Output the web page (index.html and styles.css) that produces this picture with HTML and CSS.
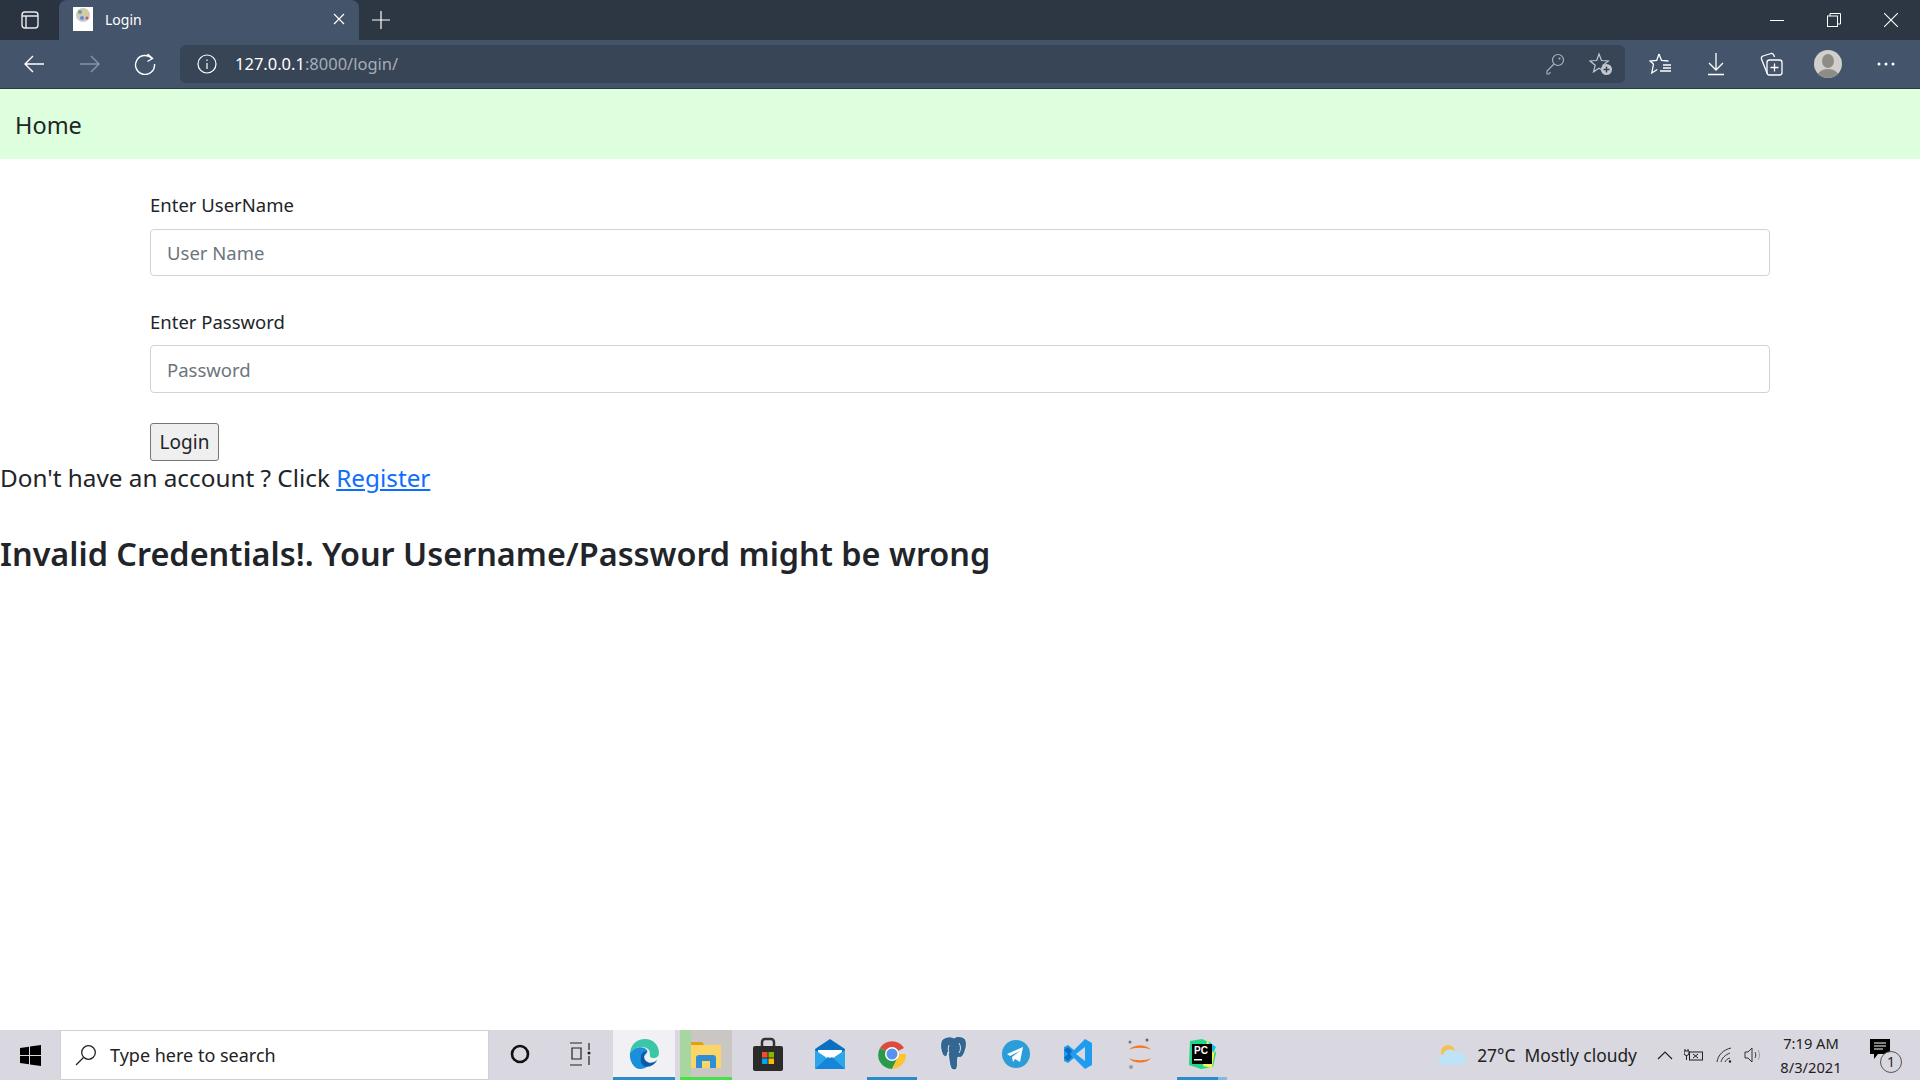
FILE: index.html
```html
<!DOCTYPE html>
<html lang="en">
<head>
    <meta charset="UTF-8">
    <title>Login</title>
    <link rel="stylesheet" href="styles.css">
</head>
<body>
    <!-- Browser tabs -->
    <div class="tabstrip">
        <div class="tab-toggle">
            <svg width="18" height="18" viewBox="0 0 18 18" fill="none" stroke="#e8eaed" stroke-width="1.4"><rect x="1" y="1" width="16" height="16" rx="3"/><path d="M1 5h16M5 5v12"/></svg>
        </div>
        <div class="tab">
            <svg class="favicon" width="20" height="24" viewBox="0 0 20 24"><rect width="20" height="24" fill="#fff"/><circle cx="10" cy="8" r="7" fill="#c9c9c9"/><circle cx="7" cy="5" r="2" fill="#6fa86f"/><circle cx="13" cy="6" r="2" fill="#e5cf5c"/><circle cx="9" cy="11" r="2" fill="#5d8fc9"/><circle cx="14" cy="11" r="1.6" fill="#cc5a5a"/></svg>
            <span class="tab-title">Login</span>
            <svg class="tab-close" width="12" height="12" viewBox="0 0 12 12" stroke="#fff" stroke-width="1.2"><path d="M1 1l10 10M11 1L1 11"/></svg>
        </div>
        <div class="new-tab">
            <svg width="18" height="18" viewBox="0 0 18 18" stroke="#fff" stroke-width="1.2"><path d="M9 0v18M0 9h18"/></svg>
        </div>
        <div class="window-controls">
            <svg width="14" height="14" viewBox="0 0 14 14" stroke="#fff" stroke-width="1"><path d="M0 7.5h14"/></svg>
            <svg width="14" height="14" viewBox="0 0 14 14" fill="none" stroke="#fff" stroke-width="1"><rect x=".5" y="3" width="10" height="10.5"/><path d="M3 3V.5h10.500V11h-3"/></svg>
            <svg width="14" height="14" viewBox="0 0 14 14" stroke="#fff" stroke-width="1.100"><path d="M0 0l14 14M14 0L0 14"/></svg>
        </div>
    </div>

    <!-- Address bar -->
    <div class="toolbar">
        <div class="nav-btn">
            <svg width="22" height="20" viewBox="0 0 22 20" fill="none" stroke="#fff" stroke-width="1.400"><path d="M21 10H2M10 2l-8 8 8 8"/></svg>
        </div>
        <div class="nav-btn">
            <svg width="22" height="20" viewBox="0 0 22 20" fill="none" stroke="#8a94a3" stroke-width="1.400"><path d="M1 10h19M12 2l8 8-8 8"/></svg>
        </div>
        <div class="nav-btn reload-btn">
            <svg width="22" height="22" viewBox="0 0 22 22" fill="none" stroke="#fff" stroke-width="1.400"><path d="M18 5.500A9.500 9.500 0 1 0 20.500 11"/><path d="M13.500 1l5 4.500-5 3" /></svg>
        </div>
        <div class="address">
            <svg class="info-icon" width="20" height="20" viewBox="0 0 20 20" fill="none" stroke="#fff" stroke-width="1.200"><circle cx="10" cy="10" r="9"/><path d="M10 9v6M10 5.500v1.500"/></svg>
            <span class="url"><span class="url-host">127.0.0.1</span>:8000/login/</span>
            <svg class="addr-key" width="20" height="22" viewBox="0 0 20 22" fill="none" stroke="#aab2bd" stroke-width="1.200"><circle cx="13" cy="7" r="5.500"/><path d="M9 11l-7 7v3h2l1.500-2"/><circle cx="14.500" cy="5.500" r=".5"/></svg>
            <svg class="addr-star" width="24" height="24" viewBox="0 0 24 24" fill="none" stroke="#c3c8d0" stroke-width="1.200"><path d="M10 2l2.500 6.500 6.800.5-5.300 4.300 1.800 6.500-5.800-3.600-5.500 3.600 1.700-6.500L1 9l6.700-.5z"/><circle cx="17.500" cy="17.500" r="5.500" fill="#c3c8d0" stroke="none"/><path d="M17.500 14.500v6M14.500 17.500h6" stroke="#384556" stroke-width="1.500"/></svg>
        </div>
        <div class="tool-btns">
            <div class="tool-btn">
                <svg width="24" height="24" viewBox="0 0 24 24" fill="none" stroke="#fff" stroke-width="1.300"><path d="M10 2l2.500 6.500 7 .5M4.500 12L1 9l6.700-.5L10 2M4.500 12l-1.700 9 5.500-3.500"/><path d="M14 13h8M14 16h8M11 19h11"/></svg>
            </div>
            <div class="tool-btn">
                <svg width="20" height="24" viewBox="0 0 20 24" fill="none" stroke="#fff" stroke-width="1.300"><path d="M10 1v17M3 11l7 7 7-7M2 22.500h16"/></svg>
            </div>
            <div class="tool-btn">
                <svg width="24" height="24" viewBox="0 0 24 24" fill="none" stroke="#fff" stroke-width="1.300"><path d="M8 21L2.500 7A2.500 2.500 0 0 1 4 4l8-2.500c1.500-.4 2.500.6 3 2l.5 1.500"/><rect x="8" y="8" width="15" height="15" rx="2.500"/><path d="M15.500 11.500v8M11.500 15.500h8"/></svg>
            </div>
            <div class="tool-btn profile-btn">
                <svg width="28" height="28" viewBox="0 0 28 28"><defs><clipPath id="avatar-clip"><circle cx="14" cy="14" r="14"/></clipPath></defs><circle cx="14" cy="14" r="14" fill="#d1cfcb"/><g clip-path="url(#avatar-clip)" fill="#8f8c88"><ellipse cx="14" cy="11" rx="6" ry="7"/><ellipse cx="14" cy="27" rx="11" ry="8"/></g></svg>
            </div>
            <div class="tool-btn">
                <svg width="18" height="4" viewBox="0 0 18 4" fill="#fff"><circle cx="2" cy="2" r="1.500"/><circle cx="9" cy="2" r="1.500"/><circle cx="16" cy="2" r="1.500"/></svg>
            </div>
        </div>
    </div>

    <!-- Page -->
    <nav class="navbar">
        <a class="navbar-home" href="#">Home</a>
    </nav>

    <main class="page">
        <form class="login-form">
            <div class="form-group">
                <label for="username">Enter UserName</label>
                <input type="text" id="username" placeholder="User Name">
            </div>
            <div class="form-group">
                <label for="password">Enter Password</label>
                <input type="password" id="password" class="password-input" placeholder="Password">
            </div>
            <button type="submit" class="login-btn">Login</button>
        </form>
        <p class="register-line">Don't have an account ? Click <a href="#">Register</a></p>
        <h3 class="error-msg">Invalid Credentials!. Your Username/Password might be wrong</h3>
    </main>

    <!-- Windows taskbar -->
    <footer class="taskbar">
        <div class="start-btn">
            <svg width="21" height="21" viewBox="0 0 21 21" fill="#000"><path d="M0 3l9-1.300V10H0zM10 1.500L21 0v10H10zM0 11h9v8.300L0 18zM10 11h11v10l-11-1.500z"/></svg>
        </div>
        <div class="search-box">
            <svg width="22" height="22" viewBox="0 0 22 22" fill="none" stroke="#222" stroke-width="1.300"><circle cx="13.500" cy="8.500" r="6.800"/><path d="M8.500 13.500L1 21"/></svg>
            <span>Type here to search</span>
        </div>
        <div class="task-slot">
            <svg width="20" height="20" viewBox="0 0 20 20" fill="none" stroke="#111" stroke-width="2.600"><circle cx="10" cy="10" r="8"/></svg>
        </div>
        <div class="task-slot task-view">
            <svg width="22" height="24" viewBox="0 0 22 24" fill="none" stroke="#222" stroke-width="1.200"><path d="M1 1h12M3 6h9v11H3zM1 23h12M20 1v7M20 14v9"/><circle cx="20" cy="11" r="1.500" fill="#222" stroke="none"/></svg>
        </div>
        <div class="task-slot is-active">
            <svg width="32" height="32" viewBox="0 0 32 32"><path d="M2 15C3 6 9 1 17 1c8 0 14 6 14 14 0 3-2 5-6 5-5 0-2-5-4-8-3-4-13-5-19 3z" fill="#39c7a5"/><path d="M2 15c4-6 13-8 17-3 1 2 0 3-2 5-3 3-2 8 3 11-2 2-5 3-8 3C6 31 1 23 2 15z" fill="#1a8fdc"/><path d="M13 19c0-4 3-6 6-6-3 3-4 7-1 10 3 3 8 2 11-1-2 5-8 8-13 6-3-2-4-5-3-9z" fill="#0c5ba8"/></svg>
        </div>
        <div class="task-slot is-open">
            <svg width="30" height="30" viewBox="0 0 30 30"><path d="M0 3h11l3 4H0z" fill="#e0a30f"/><rect y="6" width="30" height="23" fill="#fbd667"/><path d="M5 29V19a3 3 0 0 1 3-3h14a3 3 0 0 1 3 3v10h-6v-7h-8v7z" fill="#2e8fd6"/></svg>
        </div>
        <div class="task-slot">
            <svg width="30" height="34" viewBox="0 0 30 34"><path d="M9 9V5a3 3 0 0 1 3-3h6a3 3 0 0 1 3 3v4" fill="none" stroke="#333" stroke-width="2.500"/><rect y="9" width="30" height="25" rx="2" fill="#2b2b2b"/><rect x="9" y="15" width="5.500" height="5.500" fill="#f25022"/><rect x="15.500" y="15" width="5.500" height="5.500" fill="#7fba00"/><rect x="9" y="21.500" width="5.500" height="5.500" fill="#00a4ef"/><rect x="15.500" y="21.500" width="5.500" height="5.500" fill="#ffb900"/></svg>
        </div>
        <div class="task-slot">
            <svg width="30" height="30" viewBox="0 0 30 30"><path d="M0 10L15 0l15 10v3H0z" fill="#0b6fc2"/><path d="M3 11h24v8L15 25 3 19z" fill="#fff"/><path d="M0 11l15 10 15-10v19H0z" fill="#2ca6ea"/><path d="M0 30l13-12 2 1 2-1 13 12z" fill="#1684d8"/></svg>
        </div>
        <div class="task-slot running">
            <svg width="30" height="30" viewBox="0 0 30 30"><path d="M15 15L3 9a14 14 0 0 1 24 0z" fill="#dd4b3e"/><path d="M15 15l6 3-6 12A14 14 0 0 1 3 9z" fill="#2a9a4a"/><path d="M15 15h14a14 14 0 0 1-14 15l6-12z" fill="#fbc530"/><circle cx="15" cy="15" r="7" fill="#fff"/><circle cx="15" cy="15" r="5.500" fill="#5a90ee"/></svg>
        </div>
        <div class="task-slot">
            <svg width="28" height="34" viewBox="0 0 28 34"><path d="M3 2C0 4 0 11 2 16c1 3 3 4 5 3l1-4c1 5 1 12 3 16 1 2 5 3 6 0 1-4 0-7 1-11 3 2 6-2 7-6 2-5 2-11-1-13-4-2-7-2-10 0-4-2-8-1-11 1z" fill="#336791" stroke="#fff" stroke-width=".700"/><path d="M9 8c-1 3-1 5 0 8M19 6c2 3 2 7 0 10" fill="none" stroke="#fff" stroke-width=".800"/></svg>
        </div>
        <div class="task-slot">
            <svg width="28" height="28" viewBox="0 0 28 28"><circle cx="14" cy="14" r="14" fill="#2b9dd9"/><path d="M5 14l16-7-3 15-5-3-2 3-1-5 8-6-10 5z" fill="#fff"/></svg>
        </div>
        <div class="task-slot">
            <svg width="30" height="30" viewBox="0 0 30 30"><path d="M22 0l7 4v22l-7 4-11-11-6 5-4-2V8l4-2 6 5z" fill="#1f9cf0"/><path d="M22 8v14L13 15z" fill="#d8d8e0"/><path d="M1 11l4-3 4 4-2 3 2 3-4 4-4-3 4-4z" fill="#0b6cbf"/></svg>
        </div>
        <div class="task-slot">
            <svg width="26" height="32" viewBox="0 0 26 32"><path d="M2 12C6 6 20 6 24 12 20 9 6 9 2 12zM2 20c4 6 18 6 22 0-4 3-18 3-22 0z" fill="#f37726"/><circle cx="3" cy="4" r="1.500" fill="#767677"/><circle cx="20" cy="2" r="1.500" fill="#616262"/><circle cx="4" cy="29" r="2" fill="#9e9e9e"/></svg>
        </div>
        <div class="task-slot running-split">
            <svg width="30" height="30" viewBox="0 0 30 30"><path d="M3 2l12-2 9 4 5 10-3 14-12 2-12-4z" fill="#21d789"/><path d="M20 2l8 8-3 19-9-2z" fill="#fcf84a"/><path d="M22 3l7 5-3 6z" fill="#07c3f2"/><rect x="5" y="5" width="20" height="20" fill="#000"/><text x="7" y="15" class="pc-mark">PC</text><rect x="7" y="20" width="8" height="1.500" fill="#fff"/></svg>
        </div>

        <div class="tray">
            <svg class="tray-weather" width="28" height="22" viewBox="0 0 28 22"><circle cx="10" cy="8" r="7" fill="#f4c04e"/><path d="M6 21a5 5 0 0 1-1-10 7 7 0 0 1 13-2 6 6 0 0 1 6 12z" fill="#bfe3f6"/></svg>
            <span class="tray-weather-text">27°C&nbsp; Mostly cloudy</span>
            <svg class="tray-caret" width="16" height="10" viewBox="0 0 16 10" fill="none" stroke="#222" stroke-width="1.200"><path d="M1 9l7-7 7 7"/></svg>
            <svg width="20" height="14" viewBox="0 0 20 14" fill="none" stroke="#222"><path d="M1 1v2M4 1v2M0 3h5v2a2.500 2.500 0 0 1-5 0zM2.500 7v5"/><rect x="5.500" y="4" width="13" height="8"/><path d="M9 6l5 4M14 6l-5 4"/></svg>
            <svg width="18" height="16" viewBox="0 0 18 16" fill="none" stroke="#333"><path d="M2 15C3 8 8 3 16 1M6 15c1-4 4-7 9-9M10 15c1-2 2-3 5-4"/><circle cx="15" cy="14.500" r="1.200" fill="#222" stroke="none"/></svg>
            <svg width="18" height="16" viewBox="0 0 18 16" fill="none" stroke="#333"><path d="M1 5h3l4-4v14l-4-4H1zM11 5c1 2 1 4 0 6"/><path d="M14 3c2 3 2 7 0 10" stroke="#999"/></svg>
            <div class="clock">
                <span>7:19 AM</span>
                <span>8/3/2021</span>
            </div>
            <div class="notify">
                <svg width="20" height="20" viewBox="0 0 20 20"><path d="M0 0h20v15H8l-4 5v-5H0z" fill="#000"/><path d="M4 4h12M4 7h12M4 10h9" stroke="#fff"/></svg>
                <span class="notify-badge">1</span>
            </div>
        </div>
    </footer>
</body>
</html>
```

FILE: styles.css
```css
* {
    box-sizing: border-box;
}

body {
    margin: 0;
    height: 100vh;
    display: flex;
    flex-direction: column;
    overflow: hidden;
    font-family: "Noto Sans", "Open Sans", sans-serif;
    color: #212529;
    background-color: #fff;
}

/* browser chrome */
.tabstrip {
    height: 40px;
    display: flex;
    align-items: flex-end;
    background-color: #2d3643;
}

.tab-toggle {
    width: 59px;
    height: 40px;
    display: flex;
    align-items: center;
    justify-content: center;
    background-color: #2a3340;
}

.tab {
    width: 300px;
    height: 40px;
    padding: 0 14px 2px;
    display: flex;
    align-items: center;
    background-color: #44546a;
    border-radius: 8px 8px 0 0;
}

.favicon {
    margin-right: 12px;
}

.tab-title {
    flex: 1;
    font-size: 14px;
    color: #fff;
}

.new-tab {
    width: 44px;
    height: 40px;
    display: flex;
    align-items: center;
    justify-content: center;
}

.window-controls {
    margin-left: auto;
    height: 40px;
    padding-right: 22px;
    display: flex;
    align-items: center;
    gap: 43px;
}

.toolbar {
    height: 49px;
    padding: 5px 0 6px 6px;
    display: flex;
    align-items: center;
    background-color: #44546a;
    border-bottom: 1px solid #2d3643;
}

.nav-btn {
    width: 56px;
    height: 100%;
    display: flex;
    align-items: center;
    justify-content: center;
}

.reload-btn {
    padding-right: 2px;
}

.address {
    width: 1445px;
    height: 38px;
    margin-left: 6px;
    padding: 0 12px 0 17px;
    display: flex;
    align-items: center;
    background-color: #384556;
    border-radius: 6px;
}

.url {
    flex: 1;
    margin-left: 18px;
    font-size: 16.5px;
    color: #a5adb8;
}

.url-host {
    color: #fff;
}

.addr-key {
    margin-right: 24px;
}

.tool-btns {
    flex: 1;
    display: flex;
    align-items: center;
    padding-left: 8px;
}

.tool-btn {
    width: 55px;
    display: flex;
    justify-content: center;
    align-items: center;
}

.profile-btn {
    width: 60px;
}

/* page */
.navbar {
    height: 70px;
    padding: 2px 15px 0;
    display: flex;
    align-items: center;
    background-color: #dfd;
}

.navbar-home {
    font-size: 23.5px;
    color: #212529;
    text-decoration: none;
}

.page {
    flex: 1;
}

.login-form {
    width: 1620px;
    margin-left: 150px;
    padding-top: 33px;
}

.form-group {
    margin-bottom: 33px;
}

.form-group + .form-group {
    margin-bottom: 30px;
}

.form-group label {
    display: block;
    margin-bottom: 12px;
    font-size: 18.5px;
}

.form-group + .form-group label {
    margin-bottom: 11px;
}

.form-group input {
    display: block;
    width: 100%;
    height: 47px;
    padding: 0 16px;
    font-family: inherit;
    font-size: 18.5px;
    color: #495057;
    background-color: #fff;
    border: 1px solid #ced4da;
    border-radius: 4px;
}

.form-group .password-input {
    height: 48px;
}

.form-group input::placeholder {
    color: #6c757d;
}

.login-btn {
    display: block;
    width: 69px;
    height: 38px;
    padding: 0;
    font-family: inherit;
    font-size: 19px;
    color: #212529;
    background-color: #efefef;
    border: 1px solid #767676;
    border-radius: 3px;
}

.register-line {
    margin: 0 0 38px;
    font-size: 24.3px;
    line-height: 33px;
}

.register-line a {
    color: #0d6efd;
}

.error-msg {
    margin: 0;
    font-size: 32.4px;
    font-weight: 600;
    line-height: 42px;
}

/* windows taskbar */
.taskbar {
    height: 50px;
    display: flex;
    align-items: stretch;
    background-color: #d9d8e0;
}

.start-btn {
    width: 60px;
    display: flex;
    align-items: center;
    justify-content: center;
}

.search-box {
    width: 429px;
    padding-left: 14px;
    display: flex;
    align-items: center;
    gap: 13px;
    font-size: 18px;
    color: #222;
    background-color: #fff;
    border: 1px solid #cfcfd4;
}

.task-slot {
    width: 62px;
    display: flex;
    align-items: center;
    justify-content: center;
    border-bottom: 3px solid transparent;
}

.task-view {
    padding-right: 4px;
}

.task-slot.is-active {
    background-color: #f1f1f5;
    border-bottom-color: #2a8ccb;
}

.task-slot.is-open {
    width: 52px;
    margin: 0 5px;
    background: linear-gradient(90deg, #a8d6a0 0, #a8d6a0 22%, #c9c6c4 22%);
    border-bottom-color: #48e04a;
}

.task-slot.running {
    width: 50px;
    margin: 0 6px;
    border-bottom-color: #2a8ccb;
}

.task-slot.running-split {
    width: 50px;
    margin: 0 6px;
    border-image: linear-gradient(90deg, #2a8ccb 80%, #85b8e0 80%) 1;
}

.pc-mark {
    font-family: "Liberation Sans", sans-serif;
    font-size: 10px;
    font-weight: bold;
    fill: #fff;
}

.tray {
    margin-left: auto;
    padding-right: 15px;
    display: flex;
    align-items: center;
    gap: 11px;
}

.tray-weather-text {
    font-size: 17.4px;
    color: #222;
}

.tray-caret {
    margin-left: 9px;
}

.clock {
    width: 88px;
    margin-left: -6px;
    display: flex;
    flex-direction: column;
    align-items: center;
    gap: 4px;
    font-size: 14.7px;
    line-height: 20px;
    color: #222;
}

.notify {
    position: relative;
    width: 50px;
    height: 32px;
    margin-left: -11px;
    display: flex;
    justify-content: center;
}

.notify-badge {
    position: absolute;
    left: 25px;
    top: 12px;
    width: 22px;
    height: 22px;
    font-size: 14px;
    line-height: 20px;
    text-align: center;
    border: 1px solid #555;
    border-radius: 50%;
    background-color: #d9d8e0;
}
```
